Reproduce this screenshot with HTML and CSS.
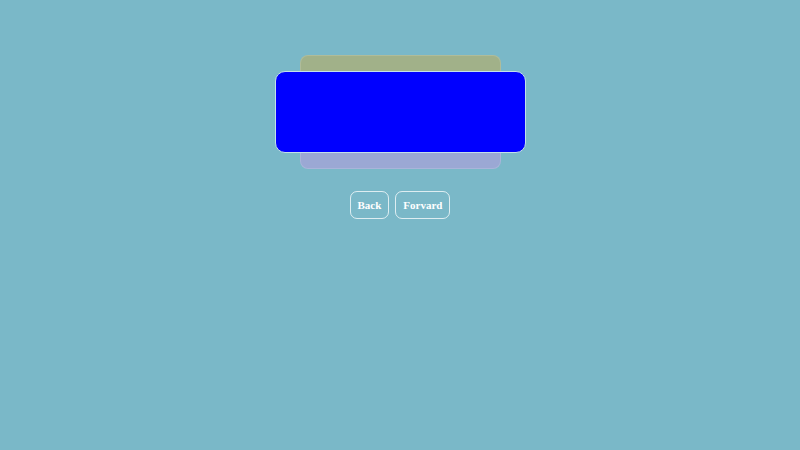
FILE: index.html
```html
<!DOCTYPE html>
<html lang="en">
<head>
    <meta charset="UTF-8">
    <meta name="viewport" content="width=device-width, initial-scale=1.0">
    <title>Cards</title>
    <link rel="stylesheet" href="styles.css">
</head>
<body>
    <div class="stack">
        <div class="card card-prev"></div>
        <div class="card card-next"></div>
        <div class="card card-current"></div>
    </div>
    <div class="controls">
        <button class="nav-btn">Back</button>
        <button class="nav-btn">Forvard</button>
    </div>
</body>
</html>
```

FILE: styles.css
```css
body {
    margin: 0;
    background: #7ab8c8;
    font-family: 'Liberation Serif', serif;
}
.stack {
    position: relative;
    width: 251px;
    height: 114px;
    margin: 55px 0 0 calc(50% - 125px);
}
.card {
    position: absolute;
    box-sizing: border-box;
}
/* cards waiting behind the current one */
.card-prev {
    top: 0;
    left: 25px;
    width: 201px;
    height: 60px;
    border-radius: 8px;
    background: #a1b189;
    border: 1px solid rgba(255, 255, 255, 0.15);
}
.card-next {
    bottom: 0;
    left: 25px;
    width: 201px;
    height: 60px;
    border-radius: 8px;
    background: #9ba8d4;
    border: 1px solid rgba(255, 255, 255, 0.15);
}
.card-current {
    top: 16px;
    left: 0;
    width: 251px;
    height: 82px;
    border-radius: 10px;
    background: #0000ff;
    border: 1px solid #c4e0ea;
}
.controls {
    display: flex;
    justify-content: center;
    gap: 6px;
    margin-top: 22px;
}
.nav-btn {
    height: 28px;
    padding: 0 7px;
    background: transparent;
    border: 1px solid rgba(255, 255, 255, 0.75);
    border-radius: 7px;
    color: #ffffff;
    font-family: 'Liberation Serif', serif;
    font-weight: bold;
    font-size: 11px;
    cursor: pointer;
}
```
